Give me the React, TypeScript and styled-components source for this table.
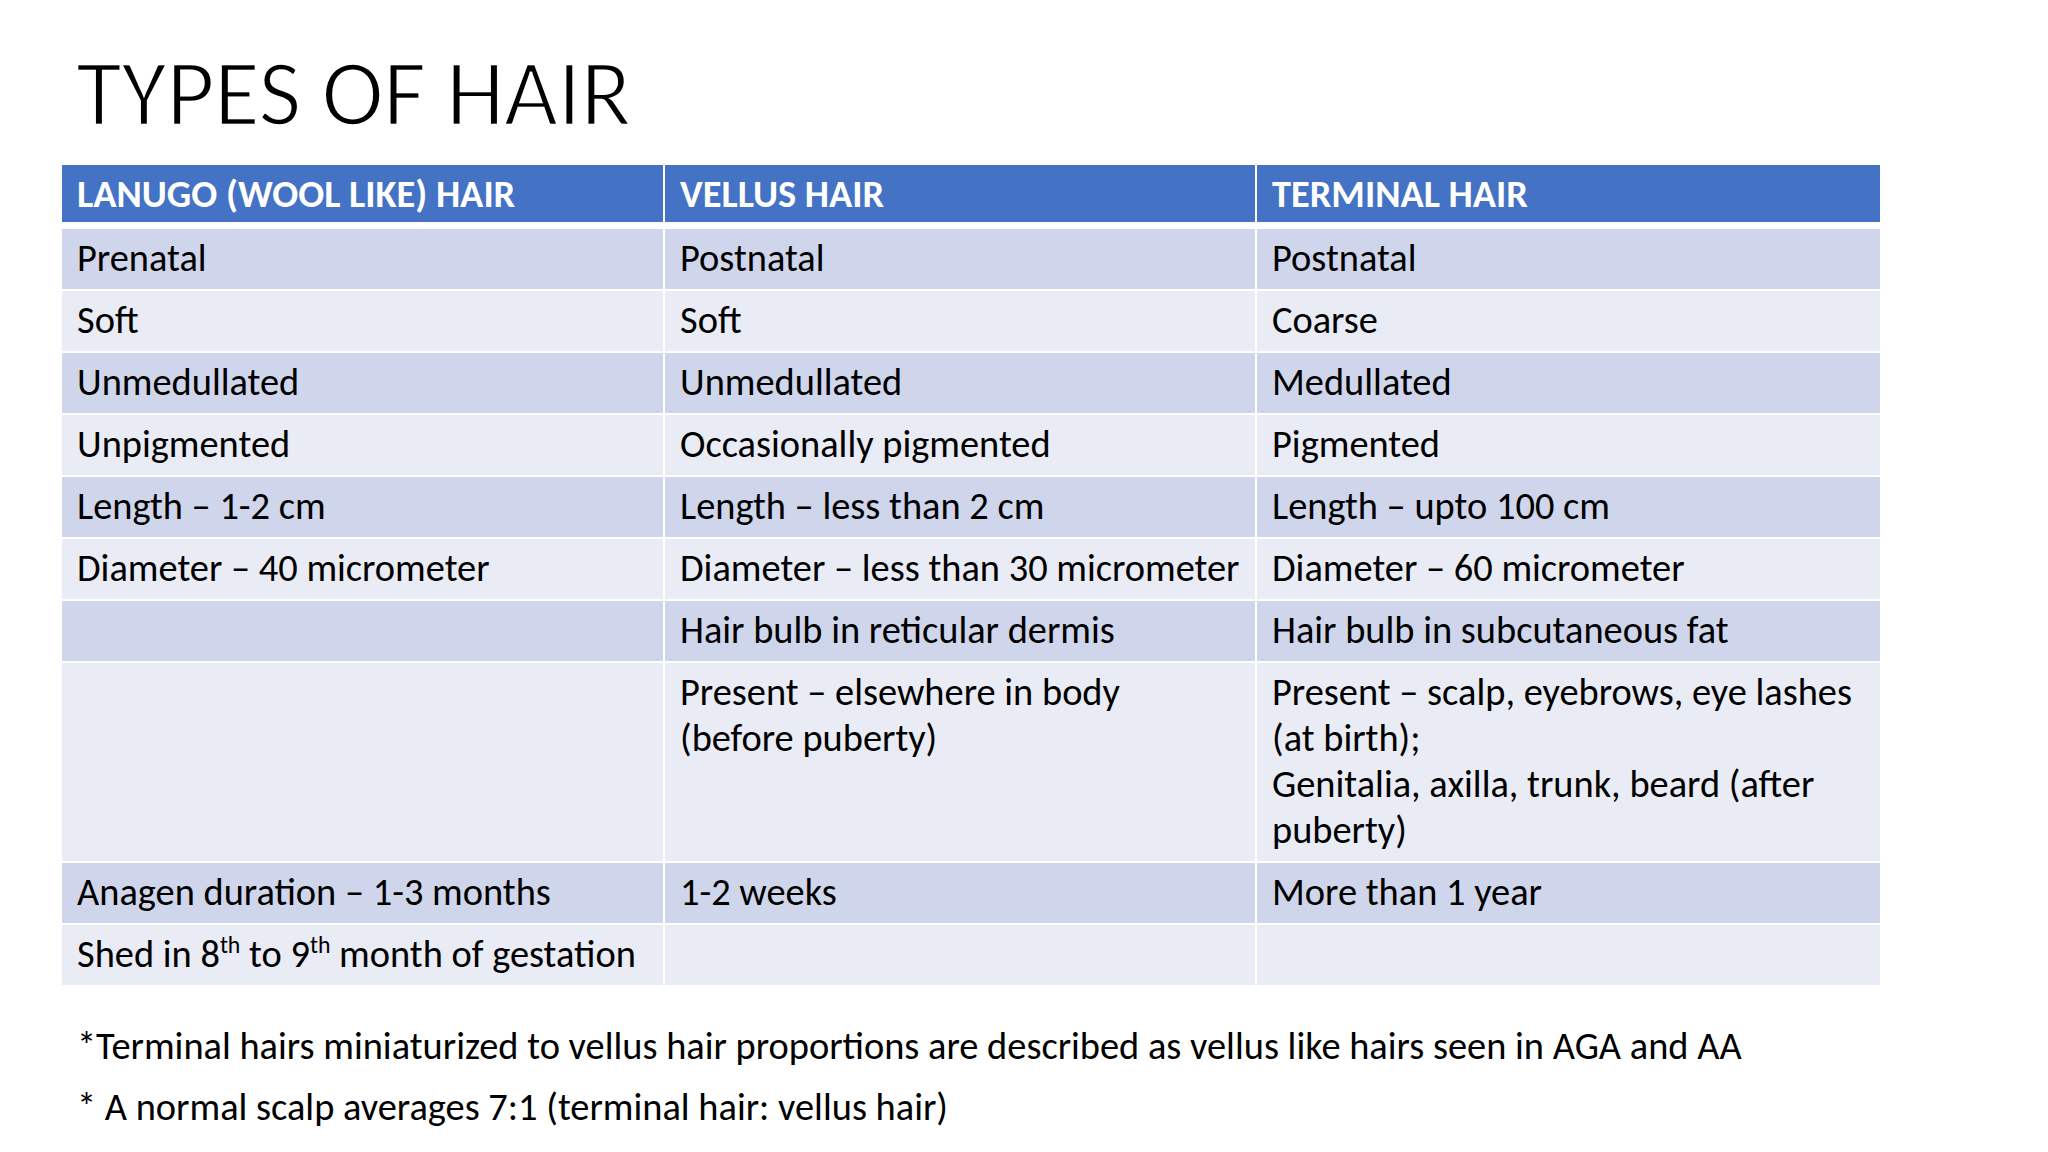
import React from "react";
import styled, { createGlobalStyle } from "styled-components";

const GlobalStyle = createGlobalStyle`
  html, body {
    margin: 0;
    padding: 0;
    background: #ffffff;
  }
  body {
    font-family: Carlito, Lato, "Noto Sans", sans-serif;
    color: #000000;
  }
`;

const Slide = styled.div`
  width: 2048px;
  height: 1152px;
  box-sizing: border-box;
  padding: 37px 0 0 62px;
  overflow: hidden;
`;

// Calibri Light is not available: thin the regular strokes with a white outline
const Title = styled.h1`
  margin: 0 0 16px 14px;
  font-weight: 400;
  font-size: 94px;
  line-height: 112px;
  letter-spacing: -0.7px;
  -webkit-text-stroke: 2.4px #ffffff;
`;

const HairTable = styled.div`
  display: flex;
  flex-direction: column;
  gap: 2px;
  width: 1818px;
`;

const Row = styled.div<{ $head?: boolean }>`
  display: grid;
  grid-template-columns: 601px 590px 623px;
  column-gap: 2px;
  margin-bottom: ${(p) => (p.$head ? "5px" : "0")};
`;

type Shade = "head" | "dark" | "light";

const Cell = styled.div<{ $shade: Shade }>`
  box-sizing: border-box;
  padding: ${(p) => (p.$shade === "head" ? "6px 15px 5px" : "6px 15px 8px")};
  font-size: 38.4px;
  line-height: 46px;
  white-space: nowrap;
  font-weight: ${(p) => (p.$shade === "head" ? 700 : 400)};
  color: ${(p) => (p.$shade === "head" ? "#ffffff" : "#000000")};
  background: ${(p) =>
    p.$shade === "head" ? "#4472c4" : p.$shade === "dark" ? "#cfd5ea" : "#e9ebf5"};
`;

const Sup = styled.sup`
  font-size: 62%;
  line-height: 0;
  vertical-align: 0.6em;
`;

const Notes = styled.div`
  margin: 38px 0 0 15px;
  display: flex;
  flex-direction: column;
  gap: 15px;
`;

const Note = styled.p`
  margin: 0;
  font-size: 38.4px;
  line-height: 46px;
  white-space: nowrap;
`;

const header = ["LANUGO (WOOL LIKE) HAIR", "VELLUS HAIR", "TERMINAL HAIR"];

const rows: React.ReactNode[][] = [
  ["Prenatal", "Postnatal", "Postnatal"],
  ["Soft", "Soft", "Coarse"],
  ["Unmedullated", "Unmedullated", "Medullated"],
  ["Unpigmented", "Occasionally pigmented", "Pigmented"],
  ["Length – 1-2 cm", "Length – less than 2 cm", "Length – upto 100 cm"],
  ["Diameter – 40 micrometer", "Diameter – less than 30 micrometer", "Diameter – 60 micrometer"],
  ["", "Hair bulb in reticular dermis", "Hair bulb in subcutaneous fat"],
  [
    "",
    <>
      Present – elsewhere in body
      <br />
      (before puberty)
    </>,
    <>
      Present – scalp, eyebrows, eye lashes
      <br />
      (at birth);
      <br />
      Genitalia, axilla, trunk, beard (after
      <br />
      puberty)
    </>,
  ],
  ["Anagen duration – 1-3 months", "1-2 weeks", "More than 1 year"],
  [
    <>
      Shed in 8<Sup>th</Sup> to 9<Sup>th</Sup> month of gestation
    </>,
    "",
    "",
  ],
];

export default function App() {
  return (
    <>
      <GlobalStyle />
      <Slide>
        <Title>TYPES OF HAIR</Title>
        <HairTable>
          <Row $head>
            {header.map((h, i) => (
              <Cell key={i} $shade="head">
                {h}
              </Cell>
            ))}
          </Row>
          {rows.map((r, i) => {
            const shade: Shade = i % 2 === 0 ? "dark" : "light";
            return (
              <Row key={i}>
                {r.map((c, j) => (
                  <Cell key={j} $shade={shade}>
                    {c}
                  </Cell>
                ))}
              </Row>
            );
          })}
        </HairTable>
        <Notes>
          <Note>
            *Terminal hairs miniaturized to vellus hair proportions are described as vellus like hairs seen in AGA and AA
          </Note>
          <Note>* A normal scalp averages 7:1 (terminal hair: vellus hair)</Note>
        </Notes>
      </Slide>
    </>
  );
}
